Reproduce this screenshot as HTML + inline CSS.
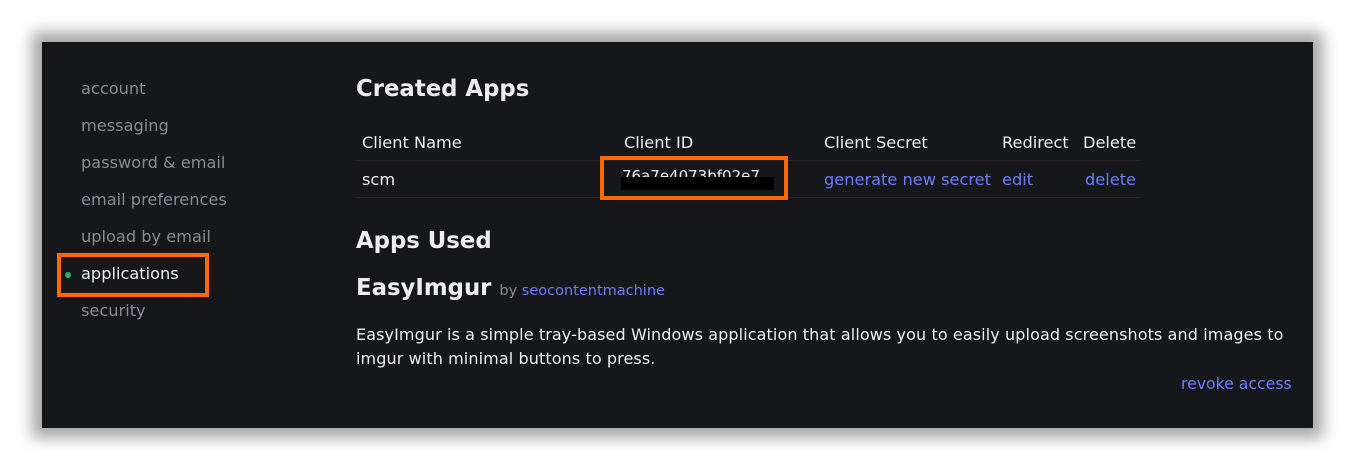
<!DOCTYPE html>
<html><head><style>
body{margin:0;width:1355px;height:470px;background:#fff;position:relative;overflow:hidden;font-family:"DejaVu Sans","Liberation Sans",sans-serif;}
.panel{position:absolute;left:42px;top:42px;width:1271px;height:386px;background:#16171b;box-shadow:0 0 14px 10px rgba(0,0,0,.35);}
.t{position:absolute;white-space:nowrap;font-size:16.2px;}
.side{color:#8a8b90;left:81px;}
.w{color:#eeeef0;}
.l{color:#6b7cff;}
.box{position:absolute;border:4px solid #ff6a00;}
.line{position:absolute;height:1px;background:#2e2326;left:356px;width:784px;}
</style></head><body>
<div class="panel"></div>
<div class="t side" style="top:79px">account</div>
<div class="t side" style="top:116px">messaging</div>
<div class="t side" style="top:153px">password &amp; email</div>
<div class="t side" style="top:190px">email preferences</div>
<div class="t side" style="top:227px">upload by email</div>
<div class="t w" style="top:264px;left:81px">applications</div>
<div style="position:absolute;left:65px;top:272px;width:6px;height:6px;border-radius:50%;background:#1bb76e"></div>
<div class="box" style="left:57px;top:253px;width:144px;height:36px"></div>
<div class="t side" style="top:301px">security</div>
<div class="t w" style="top:76px;left:356px;font-size:22.8px;font-weight:bold">Created Apps</div>
<div class="t w" style="top:133px;left:362px">Client Name</div>
<div class="t w" style="top:133px;left:624px">Client ID</div>
<div class="t w" style="top:133px;left:824px">Client Secret</div>
<div class="t w" style="top:133px;left:1002px">Redirect</div>
<div class="t w" style="top:133px;left:1083px">Delete</div>
<div class="line" style="top:160px"></div>
<div class="line" style="top:197px"></div>
<div class="t w" style="top:170px;left:362px">scm</div>
<div class="t w" style="top:167px;left:622px;font-size:15px">76a7e4073bf02e7</div>
<div style="position:absolute;left:621px;top:177px;width:153px;height:13px;background:#000"></div>
<div class="box" style="left:600px;top:156px;width:180px;height:36px"></div>
<div class="t l" style="top:170px;left:824px">generate new secret</div>
<div class="t l" style="top:170px;left:1002px">edit</div>
<div class="t l" style="top:170px;left:1085px">delete</div>
<div class="t w" style="top:228px;left:356px;font-size:22.8px;font-weight:bold">Apps Used</div>
<div class="t w" style="top:275px;left:356px;font-size:22.8px;font-weight:bold">EasyImgur <span style="font-size:14.5px;font-weight:normal;color:#8a8b90">by</span><span class="l" style="font-size:14.5px;font-weight:normal"> seocontentmachine</span></div>
<div class="t w" style="top:325px;left:356px;font-size:16px;letter-spacing:0.1px">EasyImgur is a simple tray-based Windows application that allows you to easily upload screenshots and images to</div>
<div class="t w" style="top:349px;left:356px;font-size:16px;letter-spacing:0.1px">imgur with minimal buttons to press.</div>
<div class="t l" style="top:374px;left:1181px;font-size:15.7px">revoke access</div>
</body></html>
